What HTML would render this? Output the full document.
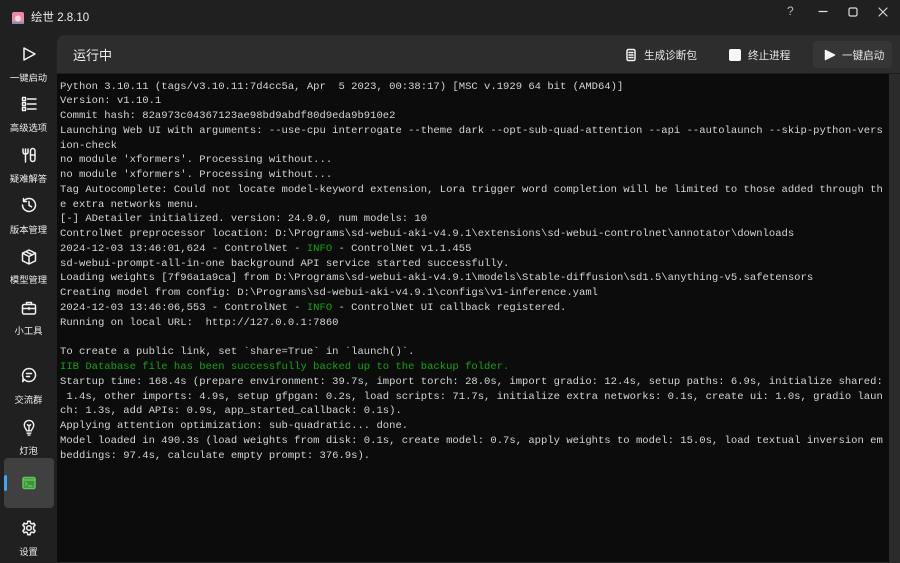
<!DOCTYPE html>
<html lang="zh"><head><meta charset="utf-8"><title>绘世</title>
<style>
*{box-sizing:border-box}
html,body{margin:0;padding:0;width:900px;height:563px;overflow:hidden;background:#202020}
body{position:relative;font-family:"Liberation Sans","Noto Sans CJK SC",sans-serif;color:#e8e8e8}
.a{position:absolute}
#panel{left:57px;top:35px;width:843px;height:528px;background:#2b2b2b;border-top-left-radius:8px}
#head{left:57px;top:35px;width:843px;height:39px;background:#2d2d2d;border-top-left-radius:8px;border-bottom:1px solid #1d1d1d}
#term{left:57px;top:74px;width:832px;height:488px;background:#0c0c0c}
#log{position:absolute;left:60px;top:79.5px;margin:0;font-family:"Liberation Mono",monospace;font-size:10.55px;line-height:14.76px;color:#d4d4d4;white-space:pre}
.g{color:#13a50e}
.nav{position:absolute;left:0;width:57px;text-align:center;font-size:9.3px;line-height:12px;color:#eee;white-space:nowrap}
svg{position:absolute;fill:none;stroke:#f2f2f2;stroke-width:1.5;stroke-linecap:round;stroke-linejoin:round}
.t{position:absolute;white-space:nowrap}
</style></head><body>
<div class="a" id="panel"></div>
<div class="a" id="head"></div>
<div class="a" id="term"></div>

<!-- title bar -->
<svg style="left:11px;top:11px" width="14" height="14" viewBox="0 0 14 14"><rect x="1" y="1" width="12" height="12" rx="2" fill="#e88aa6" stroke="none"/><circle cx="7" cy="7.5" r="3" fill="#f8d8dc" stroke="none"/><rect x="1" y="11" width="12" height="2" fill="#7c8fb8" stroke="none"/></svg>
<div class="t" style="left:31px;top:10px;font-size:11.5px;line-height:16px;color:#ededed">绘世 2.8.10</div>
<div class="t" style="left:787px;top:3px;font-size:12px;line-height:16px;color:#bbb">?</div>
<svg style="left:817px;top:6px;stroke:#ddd;stroke-width:1.2" width="12" height="12" viewBox="0 0 12 12"><path d="M2 5.500H10"/></svg>
<svg style="left:847px;top:6px;stroke:#ddd;stroke-width:1.2" width="12" height="12" viewBox="0 0 12 12"><rect x="2" y="2" width="8" height="8" rx="1.500"/></svg>
<svg style="left:877px;top:6px;stroke:#ddd;stroke-width:1.100" width="12" height="12" viewBox="0 0 12 12"><path d="M2 2L10 10M10 2L2 10"/></svg>

<!-- header -->
<div class="t" style="left:73px;top:46px;font-size:13px;line-height:19px;color:#f0f0f0">运行中</div>
<svg style="left:625px;top:48px" width="12" height="14" viewBox="0 0 12 14"><rect x="2" y="1.500" width="8" height="11" rx="1.500"/><path d="M4 4.500H8M4 7H8M4 9.500H8"/></svg>
<div class="t" style="left:644px;top:49px;font-size:10.600px;line-height:14px;color:#e8e8e8">生成诊断包</div>
<div class="a" style="left:729px;top:49px;width:12px;height:12px;background:#f7f7f7;border-radius:2px"></div>
<div class="t" style="left:748px;top:49px;font-size:10.600px;line-height:14px;color:#e8e8e8">终止进程</div>
<div class="a" style="left:813px;top:41px;width:79px;height:27px;background:#363636;border-radius:4px"></div>
<svg style="left:823px;top:48px;stroke:#f5f5f5;fill:#f5f5f5" width="14" height="14" viewBox="0 0 14 14"><path d="M2.500 2.500L11.500 7L2.500 11.500Z"/></svg>
<div class="t" style="left:842px;top:49px;font-size:10.600px;line-height:14px;color:#e8e8e8">一键启动</div>

<!-- sidebar -->
<svg style="left:21px;top:45px" width="16" height="18" viewBox="0 0 16 18"><path d="M3 3L14 9L3 15Z"/></svg>
<div class="nav" style="top:72px">一键启动</div>
<svg style="left:21px;top:96px" width="16" height="16" viewBox="0 0 16 16"><path d="M6.500 3H15M6.500 8H15M6.500 13H15"/><rect x="1.500" y="1.500" width="3" height="3"/><rect x="1.500" y="6.500" width="3" height="3"/><rect x="1.500" y="11.500" width="3" height="3"/></svg>
<div class="nav" style="top:122px">高级选项</div>
<svg style="left:21px;top:147px" width="16" height="16" viewBox="0 0 16 16"><path d="M2 2V5C2 6.500 3 7 4.500 7S7 6.500 7 5V2M4.500 2V15"/><rect x="9.500" y="1.500" width="4.500" height="13" rx="2.200"/><path d="M9.500 8H14"/></svg>
<div class="nav" style="top:173px">疑难解答</div>
<svg style="left:21px;top:197px" width="16" height="16" viewBox="0 0 16 16"><path d="M2.500 4.500A6.500 6.500 0 1 1 1.500 8M2.500 1.500V4.500H5.500M8 4.500V8.300L10.500 9.800"/></svg>
<div class="nav" style="top:224px">版本管理</div>
<svg style="left:21px;top:249px" width="16" height="16" viewBox="0 0 16 16"><path d="M8 1L14.500 4.200V11.800L8 15L1.500 11.800V4.200ZM1.500 4.200L8 7.500L14.500 4.200M8 7.500V15M4.800 2.600L11.200 5.900"/></svg>
<div class="nav" style="top:274px">模型管理</div>
<svg style="left:21px;top:300px" width="16" height="16" viewBox="0 0 16 16"><rect x="1.500" y="4.500" width="13" height="9.500" rx="1.500"/><path d="M5.500 4.500V2.500H10.500V4.500M1.500 8.500H14.500M8 7.500V9.500"/></svg>
<div class="nav" style="top:325px">小工具</div>
<svg style="left:21px;top:367px" width="16" height="16" viewBox="0 0 16 16"><path d="M8 1.500A6.500 6.500 0 1 1 3.200 12.400L1.800 14.600L2.200 10.800A6.500 6.500 0 0 1 8 1.500ZM5.500 6.500H10.500M5.500 9.500H8.500"/></svg>
<div class="nav" style="top:394px">交流群</div>
<svg style="left:21px;top:419px" width="16" height="17" viewBox="0 0 16 18"><path d="M5.500 12.500C5.500 10.800 3 9.800 3 6.500A5 5 0 0 1 13 6.500C13 9.800 10.500 10.800 10.500 12.500ZM6 15H10M7 17H9M8 12.500V7M6.300 6L8 7.500L9.700 6"/></svg>
<div class="nav" style="top:445px">灯泡</div>
<div class="a" style="left:4px;top:458px;width:50px;height:50px;background:#404040;border-radius:4px"></div>
<div class="a" style="left:4px;top:475px;width:3px;height:16px;background:#3fa6f2;border-radius:2px"></div>
<svg style="left:22px;top:476px;stroke:#5ec85a" width="14" height="14" viewBox="0 0 14 14"><rect x="1" y="1.500" width="12" height="11" rx="1.500" fill="#3f8f3d"/><path d="M1 4H13M3.500 6.500L5 8L3.500 9.500M6.500 10H10"/></svg>
<svg style="left:21px;top:520px" width="16" height="16" viewBox="0 0 16 16"><circle cx="8" cy="8" r="2.300"/><path d="M6.800 1.300H9.200L9.600 3.200L11 3.900L12.900 3.200L14.100 5.300L12.600 6.600V9.400L14.100 10.700L12.900 12.800L11 12.100L9.600 12.800L9.200 14.700H6.800L6.400 12.800L5 12.100L3.100 12.800L1.900 10.700L3.400 9.400V6.600L1.900 5.300L3.100 3.200L5 3.900L6.400 3.200Z"/></svg>
<div class="nav" style="top:546px">设置</div>

<pre id="log">Python 3.10.11 (tags/v3.10.11:7d4cc5a, Apr  5 2023, 00:38:17) [MSC v.1929 64 bit (AMD64)]
Version: v1.10.1
Commit hash: 82a973c04367123ae98bd9abdf80d9eda9b910e2
Launching Web UI with arguments: --use-cpu interrogate --theme dark --opt-sub-quad-attention --api --autolaunch --skip-python-vers
ion-check
no module 'xformers'. Processing without...
no module 'xformers'. Processing without...
Tag Autocomplete: Could not locate model-keyword extension, Lora trigger word completion will be limited to those added through th
e extra networks menu.
[-] ADetailer initialized. version: 24.9.0, num models: 10
ControlNet preprocessor location: D:\Programs\sd-webui-aki-v4.9.1\extensions\sd-webui-controlnet\annotator\downloads
2024-12-03 13:46:01,624 - ControlNet - <span class="g">INFO</span> - ControlNet v1.1.455
sd-webui-prompt-all-in-one background API service started successfully.
Loading weights [7f96a1a9ca] from D:\Programs\sd-webui-aki-v4.9.1\models\Stable-diffusion\sd1.5\anything-v5.safetensors
Creating model from config: D:\Programs\sd-webui-aki-v4.9.1\configs\v1-inference.yaml
2024-12-03 13:46:06,553 - ControlNet - <span class="g">INFO</span> - ControlNet UI callback registered.
Running on local URL:  http://127.0.0.1:7860

To create a public link, set `share=True` in `launch()`.
<span class="g">IIB Database file has been successfully backed up to the backup folder.</span>
Startup time: 168.4s (prepare environment: 39.7s, import torch: 28.0s, import gradio: 12.4s, setup paths: 6.9s, initialize shared:
 1.4s, other imports: 4.9s, setup gfpgan: 0.2s, load scripts: 71.7s, initialize extra networks: 0.1s, create ui: 1.0s, gradio laun
ch: 1.3s, add APIs: 0.9s, app_started_callback: 0.1s).
Applying attention optimization: sub-quadratic... done.
Model loaded in 490.3s (load weights from disk: 0.1s, create model: 0.7s, apply weights to model: 15.0s, load textual inversion em
beddings: 97.4s, calculate empty prompt: 376.9s).</pre>
</body></html>
